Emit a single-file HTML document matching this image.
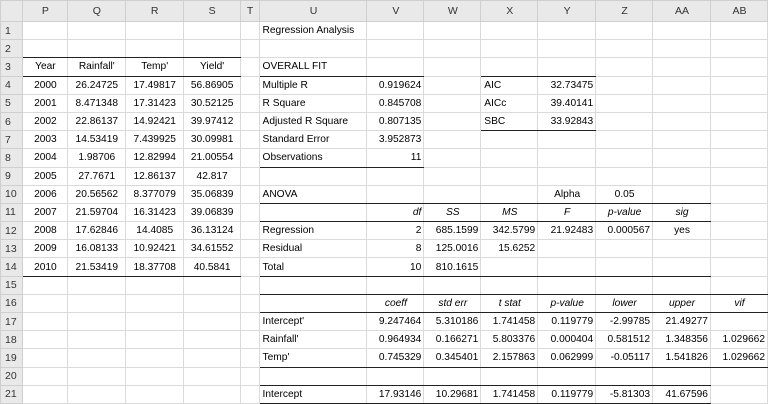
<!DOCTYPE html>
<html><head><meta charset="utf-8"><style>
body{margin:0;background:#fff;width:768px;height:404px;overflow:hidden}
table{border-collapse:collapse;table-layout:fixed;font-family:"Liberation Sans",Arial,sans-serif;font-size:10.2px;color:#000}
td{border:1px solid #dadada;padding:0 2px 0 3px;height:17.2px;white-space:nowrap;overflow:hidden;text-align:left}
tr.h td{background:#e9e9e9;color:#333;text-align:center;height:20px;border-color:#cfcfcf;font-size:10.5px}
td.rh{background:#e9e9e9;color:#333;text-align:left;padding-left:4px;border-color:#cfcfcf;font-size:10.5px}
.c{text-align:center}.r{text-align:right}.i{font-style:italic;text-align:center}
.b{border-bottom:1.5px solid #222}
</style></head><body>
<table>
<colgroup><col style="width:22px"><col style="width:45px"><col style="width:58px"><col style="width:58px"><col style="width:57px"><col style="width:19px"><col style="width:108px"><col style="width:57px"><col style="width:57px"><col style="width:57px"><col style="width:58px"><col style="width:57px"><col style="width:58px"><col style="width:57px"></colgroup>
<tr class="h"><td></td><td>P</td><td>Q</td><td>R</td><td>S</td><td>T</td><td>U</td><td>V</td><td>W</td><td>X</td><td>Y</td><td>Z</td><td>AA</td><td>AB</td></tr>
<tr><td class="rh">1</td><td></td><td></td><td></td><td></td><td></td><td>Regression Analysis</td><td></td><td></td><td></td><td></td><td></td><td></td><td></td></tr>
<tr><td class="rh">2</td><td class="b"></td><td class="b"></td><td class="b"></td><td class="b"></td><td></td><td></td><td></td><td></td><td></td><td></td><td></td><td></td><td></td></tr>
<tr><td class="rh">3</td><td class="c b">Year</td><td class="c b">Rainfall'</td><td class="c b">Temp'</td><td class="c b">Yield'</td><td></td><td class="b">OVERALL FIT</td><td class="b"></td><td></td><td class="b"></td><td class="b"></td><td></td><td></td><td></td></tr>
<tr><td class="rh">4</td><td class="c">2000</td><td class="c">26.24725</td><td class="c">17.49817</td><td class="c">56.86905</td><td></td><td>Multiple R</td><td class="r">0.919624</td><td></td><td>AIC</td><td class="r">32.73475</td><td></td><td></td><td></td></tr>
<tr><td class="rh">5</td><td class="c">2001</td><td class="c">8.471348</td><td class="c">17.31423</td><td class="c">30.52125</td><td></td><td>R Square</td><td class="r">0.845708</td><td></td><td>AICc</td><td class="r">39.40141</td><td></td><td></td><td></td></tr>
<tr><td class="rh">6</td><td class="c">2002</td><td class="c">22.86137</td><td class="c">14.92421</td><td class="c">39.97412</td><td></td><td>Adjusted R Square</td><td class="r">0.807135</td><td></td><td class="b">SBC</td><td class="r b">33.92843</td><td></td><td></td><td></td></tr>
<tr><td class="rh">7</td><td class="c">2003</td><td class="c">14.53419</td><td class="c">7.439925</td><td class="c">30.09981</td><td></td><td>Standard Error</td><td class="r">3.952873</td><td></td><td></td><td></td><td></td><td></td><td></td></tr>
<tr><td class="rh">8</td><td class="c">2004</td><td class="c">1.98706</td><td class="c">12.82994</td><td class="c">21.00554</td><td></td><td class="b">Observations</td><td class="r b">11</td><td></td><td></td><td></td><td></td><td></td><td></td></tr>
<tr><td class="rh">9</td><td class="c">2005</td><td class="c">27.7671</td><td class="c">12.86137</td><td class="c">42.817</td><td></td><td></td><td></td><td></td><td></td><td></td><td></td><td></td><td></td></tr>
<tr><td class="rh">10</td><td class="c">2006</td><td class="c">20.56562</td><td class="c">8.377079</td><td class="c">35.06839</td><td></td><td class="b">ANOVA</td><td class="b"></td><td class="b"></td><td class="b"></td><td class="c b">Alpha</td><td class="c b">0.05</td><td class="b"></td><td></td></tr>
<tr><td class="rh">11</td><td class="c">2007</td><td class="c">21.59704</td><td class="c">16.31423</td><td class="c">39.06839</td><td></td><td class="b"></td><td class="i b" style="text-align:right">df</td><td class="i b">SS</td><td class="i b">MS</td><td class="i b">F</td><td class="i b">p-value</td><td class="i b">sig</td><td></td></tr>
<tr><td class="rh">12</td><td class="c">2008</td><td class="c">17.62846</td><td class="c">14.4085</td><td class="c">36.13124</td><td></td><td>Regression</td><td class="r">2</td><td class="r">685.1599</td><td class="r">342.5799</td><td class="r">21.92483</td><td class="r">0.000567</td><td class="c">yes</td><td></td></tr>
<tr><td class="rh">13</td><td class="c">2009</td><td class="c">16.08133</td><td class="c">10.92421</td><td class="c">34.61552</td><td></td><td>Residual</td><td class="r">8</td><td class="r">125.0016</td><td class="r">15.6252</td><td></td><td></td><td></td><td></td></tr>
<tr><td class="rh">14</td><td class="c b">2010</td><td class="c b">21.53419</td><td class="c b">18.37708</td><td class="c b">40.5841</td><td></td><td class="b">Total</td><td class="r b">10</td><td class="r b">810.1615</td><td class="b"></td><td class="b"></td><td class="b"></td><td class="b"></td><td></td></tr>
<tr><td class="rh">15</td><td></td><td></td><td></td><td></td><td></td><td class="b"></td><td class="b"></td><td class="b"></td><td class="b"></td><td class="b"></td><td class="b"></td><td class="b"></td><td class="b"></td></tr>
<tr><td class="rh">16</td><td></td><td></td><td></td><td></td><td></td><td class="b"></td><td class="i b">coeff</td><td class="i b">std err</td><td class="i b">t stat</td><td class="i b">p-value</td><td class="i b">lower</td><td class="i b">upper</td><td class="i b">vif</td></tr>
<tr><td class="rh">17</td><td></td><td></td><td></td><td></td><td></td><td>Intercept'</td><td class="r">9.247464</td><td class="r">5.310186</td><td class="r">1.741458</td><td class="r">0.119779</td><td class="r">-2.99785</td><td class="r">21.49277</td><td></td></tr>
<tr><td class="rh">18</td><td></td><td></td><td></td><td></td><td></td><td>Rainfall'</td><td class="r">0.964934</td><td class="r">0.166271</td><td class="r">5.803376</td><td class="r">0.000404</td><td class="r">0.581512</td><td class="r">1.348356</td><td class="r">1.029662</td></tr>
<tr><td class="rh">19</td><td></td><td></td><td></td><td></td><td></td><td class="b">Temp'</td><td class="r b">0.745329</td><td class="r b">0.345401</td><td class="r b">2.157863</td><td class="r b">0.062999</td><td class="r b">-0.05117</td><td class="r b">1.541826</td><td class="r b">1.029662</td></tr>
<tr><td class="rh">20</td><td></td><td></td><td></td><td></td><td></td><td class="b"></td><td class="b"></td><td class="b"></td><td class="b"></td><td class="b"></td><td class="b"></td><td class="b"></td><td></td></tr>
<tr><td class="rh">21</td><td></td><td></td><td></td><td></td><td></td><td class="b">Intercept</td><td class="r b">17.93146</td><td class="r b">10.29681</td><td class="r b">1.741458</td><td class="r b">0.119779</td><td class="r b">-5.81303</td><td class="r b">41.67596</td><td></td></tr>
</table>
</body></html>
